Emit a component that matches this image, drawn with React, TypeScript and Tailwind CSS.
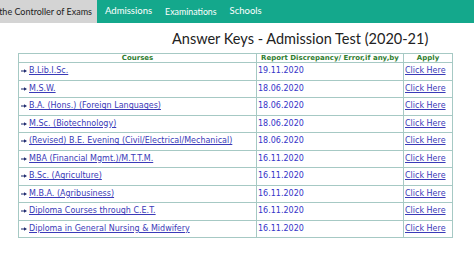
const rows = [
  { course: "B.Lib.I.Sc.", date: "19.11.2020" },
  { course: "M.S.W.", date: "18.06.2020" },
  { course: "B.A. (Hons.) (Foreign Languages)", date: "18.06.2020" },
  { course: "M.Sc. (Biotechnology)", date: "18.06.2020" },
  { course: "(Revised) B.E. Evening (Civil/Electrical/Mechanical)", date: "18.06.2020" },
  { course: "MBA (Financial Mgmt.)/M.T.T.M.", date: "16.11.2020" },
  { course: "B.Sc. (Agriculture)", date: "16.11.2020" },
  { course: "M.B.A. (Agribusiness)", date: "16.11.2020" },
  { course: "Diploma Courses through C.E.T.", date: "16.11.2020" },
  { course: "Diploma in General Nursing & Midwifery", date: "16.11.2020" },
];

function Bullet() {
  return (
    <svg width="6" height="4" viewBox="0 0 6 4" className="mr-[2px] shrink-0">
      <path d="M0 1.5 L3 1.5 L3 0.2 L6 2 L3 3.8 L3 2.5 L0 2.5 Z" fill="#1f2a6e" />
    </svg>
  );
}

export default function App() {
  return (
    <div className="h-[266px] w-[474px] overflow-hidden bg-white">
      <nav className="flex h-[23px] items-stretch bg-[#14a88c] font-['Lato',sans-serif] text-[9.5px] text-white">
        <div className="flex w-[97px] items-center justify-end overflow-hidden whitespace-nowrap bg-[#d4d4d4] pr-[5px] text-[9px] text-[#222]">
          the Controller of Exams
        </div>
        <div className="flex items-center gap-[13px] pl-[8px]">
          <span>Admissions</span>
          <span className="text-[8.8px]">Examinations</span>
          <span>Schools</span>
        </div>
      </nav>

      <h1 className="mt-[4px] whitespace-nowrap pl-[172px] font-['Lato',sans-serif] text-[14.5px] leading-[24px] text-[#222]">
        Answer Keys - Admission Test (2020-21)
      </h1>

      <table className="ml-[18px] mt-[2px] w-[434px] table-fixed border-collapse font-['DejaVu_Sans',Verdana,sans-serif] text-[8px]">
        <colgroup>
          <col className="w-[238px]" />
          <col className="w-[147px]" />
          <col className="w-[49px]" />
        </colgroup>
        <thead>
          <tr className="h-[9px] text-[7px] font-bold leading-[8px] text-[#2f7d2f]">
            <th className="border border-[#a6c9c4] p-0 text-center">Courses</th>
            <th className="border border-[#a6c9c4] p-0 text-center">Report Discrepancy/ Error,if any,by</th>
            <th className="border border-[#a6c9c4] p-0 text-center">Apply</th>
          </tr>
        </thead>
        <tbody>
          {rows.map((r) => (
            <tr key={r.course} className="h-[17.5px]">
              <td className="border border-[#a6c9c4] px-[2px] py-0">
                <div className="flex items-center whitespace-nowrap">
                  <Bullet />
                  <a className="text-[#3a3ab8] underline">{r.course}</a>
                </div>
              </td>
              <td className="border border-[#a6c9c4] px-[1px] py-0 text-[#3434c8]">{r.date}</td>
              <td className="border border-[#a6c9c4] px-[1px] py-0">
                <a className="whitespace-nowrap text-[#3a3ab8] underline">Click Here</a>
              </td>
            </tr>
          ))}
        </tbody>
      </table>
    </div>
  );
}
